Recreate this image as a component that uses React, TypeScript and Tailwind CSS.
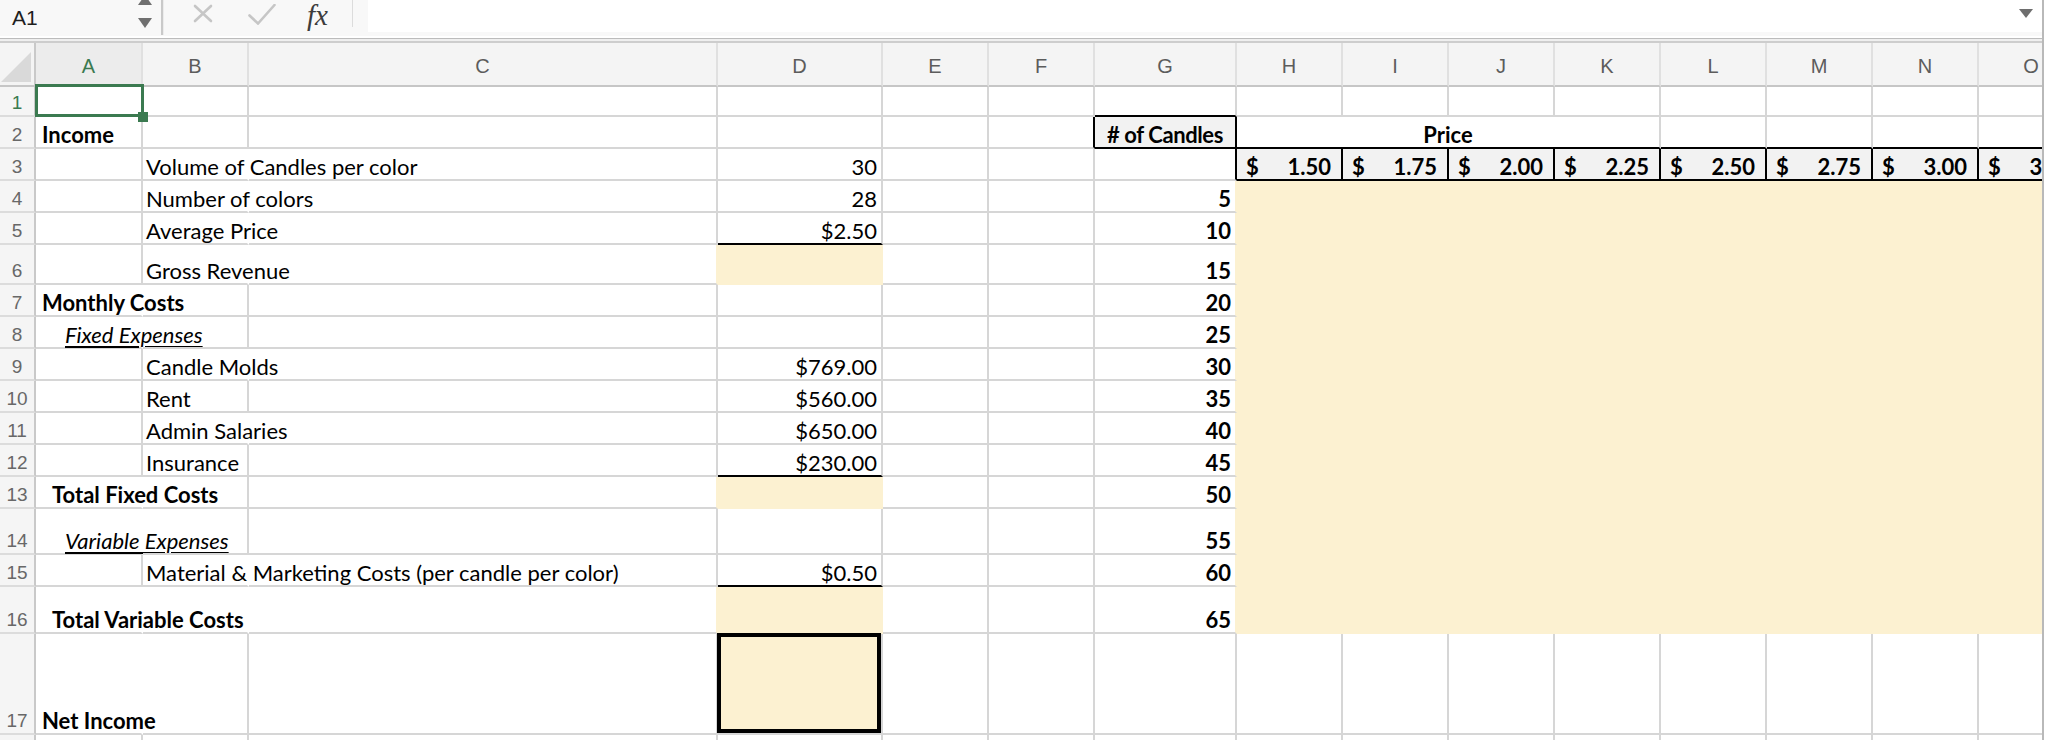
import React from 'react';

type Spec = {
  t?: React.ReactNode;
  k?: string;
  tk?: string;
  r?: string;
  b?: string;
  span?: string;
  extra?: React.ReactNode;
  skip?: boolean;
};

type RowDef = { h: string; n: string; cells: Record<string, Spec>; active?: boolean };

const LETTERS = ['A', 'B', 'C', 'D', 'E', 'F', 'G', 'H', 'I', 'J', 'K', 'L', 'M', 'N', 'O'];
const PRICE_COLS = ['H', 'I', 'J', 'K', 'L', 'M', 'N', 'O'];
const PRICES = ['1.50', '1.75', '2.00', '2.25', '2.50', '2.75', '3.00', '3.25'];
// row header + A..O
const GRID =
  'grid grid-cols-[36px_107px_106px_469px_165px_106px_106px_142px_106px_106px_106px_106px_106px_106px_106px_106px]';
const CELL_FONT = "font-['Lato',sans-serif] text-[22px] text-black";
const UI_FONT = "font-['Liberation_Sans',Arial,sans-serif]";
const GREEN = 'border-[#3b7a50]';

// cell helpers
const SKIP: Spec = { skip: true };
const cream: Spec = { k: 'bg-[#fcf1d1]', r: 'border-r-[#fcf1d1]', b: 'border-b-[#fcf1d1]' };
const creamBlock: Record<string, Spec> = Object.fromEntries(PRICE_COLS.map((c) => [c, cream]));
const over = (s: Spec): Spec => ({ ...s, r: 'border-r-transparent' });
const lbl = (t: string): Spec => ({ t, k: 'pl-[3px]' });
const num = (t: string, b?: string): Spec => ({ t, k: 'justify-end pr-[4px]', b });
const gNum = (t: string): Spec => ({ t, k: 'justify-end pr-[4px] font-bold', r: 'border-r-[#fcf1d1]' });
const head = (t: string, pl: string, style = 'font-bold'): Spec => over({ t, k: `${pl} ${style}` });
const underlined = 'italic underline decoration-[1.5px] underline-offset-[3px]';

const priceRow: Record<string, Spec> = Object.fromEntries(
  PRICE_COLS.map((c, i) => [
    c,
    {
      t: (
        <>
          <span>$</span>
          <span>{PRICES[i]}</span>
        </>
      ),
      tk: 'flex flex-1 justify-between',
      k: 'bg-[#f2f2f2] pl-[9px] pr-[10px] font-bold',
      r: 'border-r-black',
      b: 'border-b-black',
    },
  ]),
);

const selection = (
  <>
    <div className={`pointer-events-none absolute -top-[3px] -right-[3px] -bottom-[2px] -left-px z-10 border-[3px] ${GREEN}`} />
    <div className="absolute top-[25px] left-[102px] z-20 h-[10px] w-[10px] bg-[#3b7a50]" />
  </>
);

const totalBox = <div className="absolute -top-px right-0 bottom-0 -left-px z-10 border-4 border-black" />;

const rows: RowDef[] = [
  { h: 'h-[30px]', n: '1', active: true, cells: { A: { extra: selection }, G: { b: 'border-b-black' } } },
  {
    h: 'h-[32px]',
    n: '2',
    cells: {
      A: { t: 'Income', k: 'pl-[6px] font-bold' },
      F: { r: 'border-r-black' },
      G: {
        t: '# of Candles',
        k: 'justify-center bg-[#f2f2f2] font-bold tracking-[-0.4px]',
        r: 'border-r-black',
        b: 'border-b-black',
      },
      H: { t: 'Price', k: 'justify-center font-bold', span: 'col-span-4', b: 'border-b-black' },
      I: SKIP,
      J: SKIP,
      K: SKIP,
      L: { b: 'border-b-black' },
      M: { b: 'border-b-black' },
      N: { b: 'border-b-black' },
      O: { b: 'border-b-black' },
    },
  },
  {
    h: 'h-[32px]',
    n: '3',
    cells: { B: over(lbl('Volume of Candles per color')), D: num('30'), G: { r: 'border-r-black' }, ...priceRow },
  },
  { h: 'h-[32px]', n: '4', cells: { B: over(lbl('Number of colors')), D: num('28'), G: gNum('5'), ...creamBlock } },
  {
    h: 'h-[32px]',
    n: '5',
    cells: { B: over(lbl('Average Price')), D: num('$2.50', 'border-b-black'), G: gNum('10'), ...creamBlock },
  },
  {
    h: 'h-[40px]',
    n: '6',
    cells: {
      B: over(lbl('Gross Revenue')),
      C: { r: 'border-r-[#fcf1d1]' },
      D: cream,
      G: gNum('15'),
      ...creamBlock,
    },
  },
  { h: 'h-[32px]', n: '7', cells: { A: head('Monthly Costs', 'pl-[6px]'), G: gNum('20'), ...creamBlock } },
  {
    h: 'h-[32px]',
    n: '8',
    cells: { A: head('Fixed Expenses', 'pl-[29px]', underlined), G: gNum('25'), ...creamBlock },
  },
  {
    h: 'h-[32px]',
    n: '9',
    cells: { B: over(lbl('Candle Molds')), D: num('$769.00'), G: gNum('30'), ...creamBlock },
  },
  { h: 'h-[32px]', n: '10', cells: { B: lbl('Rent'), D: num('$560.00'), G: gNum('35'), ...creamBlock } },
  {
    h: 'h-[32px]',
    n: '11',
    cells: { B: over(lbl('Admin Salaries')), D: num('$650.00'), G: gNum('40'), ...creamBlock },
  },
  {
    h: 'h-[32px]',
    n: '12',
    cells: { B: lbl('Insurance'), D: num('$230.00', 'border-b-black'), G: gNum('45'), ...creamBlock },
  },
  {
    h: 'h-[32px]',
    n: '13',
    cells: {
      A: head('Total Fixed Costs', 'pl-[16px]'),
      C: { r: 'border-r-[#fcf1d1]' },
      D: cream,
      G: gNum('50'),
      ...creamBlock,
    },
  },
  {
    h: 'h-[46px]',
    n: '14',
    cells: { A: head('Variable Expenses', 'pl-[29px]', underlined), G: gNum('55'), ...creamBlock },
  },
  {
    h: 'h-[32px]',
    n: '15',
    cells: {
      B: over(lbl('Material & Marketing Costs (per candle per color)')),
      D: num('$0.50', 'border-b-black'),
      G: gNum('60'),
      ...creamBlock,
    },
  },
  {
    h: 'h-[47px]',
    n: '16',
    cells: {
      A: head('Total Variable Costs', 'pl-[16px]'),
      B: { r: 'border-r-transparent' },
      C: { r: 'border-r-[#fcf1d1]' },
      D: cream,
      G: gNum('65'),
      ...creamBlock,
    },
  },
  {
    h: 'h-[101px]',
    n: '17',
    cells: { A: head('Net Income', 'pl-[6px]'), D: { k: 'bg-[#fcf1d1]', extra: totalBox } },
  },
  { h: 'h-[32px]', n: '18', cells: {} },
];

function SheetCell({ t, k = '', tk = '', r = 'border-r-[#d6d6d6]', b = 'border-b-[#d6d6d6]', span = '', extra }: Spec) {
  return (
    <div className={`relative flex min-w-0 items-end border-r-2 border-b-2 whitespace-nowrap ${r} ${b} ${span} ${k}`}>
      {t !== undefined && <span className={`leading-[24px] ${tk}`}>{t}</span>}
      {extra}
    </div>
  );
}

function Toolbar() {
  return (
    <div className="flex h-[36px] bg-[#f8f8f8]">
      {/* name box */}
      <div className="relative flex w-[161px] items-center pl-[12px]">
        <span className={`${UI_FONT} text-[21px] text-[#1e1e1e]`}>A1</span>
        <svg className="absolute top-0 left-[138px]" width="14" height="30" viewBox="0 0 14 30">
          <polygon points="0,5 14,5 7,-5" fill="#6f6f6f" />
          <polygon points="0,18 14,18 7,28" fill="#6f6f6f" />
        </svg>
      </div>
      <div className="h-[35px] w-[3px] border-l-2 border-l-[#c9c9c9] bg-[#ececec]" />
      {/* cancel / enter / function */}
      <div className="flex w-[188px] items-start pt-[4px] pl-[29px]">
        <svg width="20" height="19" viewBox="0 0 20 19">
          <path d="M2 2L18 17M18 2L2 17" stroke="#c6c6c6" strokeWidth="2.6" strokeLinecap="round" />
        </svg>
        <svg className="ml-[35px]" width="28" height="21" viewBox="0 0 28 21">
          <path d="M1.5 11.5L10 19.5L26.5 1" stroke="#c6c6c6" strokeWidth="2.6" fill="none" strokeLinecap="round" />
        </svg>
        <span className="-mt-[10px] ml-[31px] font-['Liberation_Serif',serif] text-[29px] text-[#3c3c3c] italic">fx</span>
      </div>
      <div className="h-[27px] w-px bg-[#dcdcdc]" />
      {/* formula bar */}
      <div className="ml-[15px] flex h-[32px] flex-1 items-start justify-end bg-white pt-[9px] pr-[9px]">
        <svg width="14" height="10" viewBox="0 0 14 10">
          <polygon points="0,0 14,0 7,9" fill="#6e6e6e" />
        </svg>
      </div>
    </div>
  );
}

function ColumnHeader() {
  return (
    <div className={`${GRID} h-[44px] bg-[#f4f4f4] ${UI_FONT} text-[20px] text-[#5c5c5c]`}>
      <div className="flex items-end justify-end border-r-2 border-b-2 border-r-[#c9c9c9] border-b-[#c6c6c6] pr-[3px] pb-[3px]">
        <svg width="30" height="30" viewBox="0 0 30 30">
          <polygon points="30,0 30,30 0,30" fill="#d9d9d9" />
        </svg>
      </div>
      {LETTERS.map((l) => (
        <div
          key={l}
          className={`flex items-center justify-center border-r-2 border-b-2 border-r-[#e0e0e0] border-b-[#c6c6c6] pt-[4px] ${
            l === 'A' ? 'bg-[#ececec] text-[#3b7a50]' : ''
          }`}
        >
          {l}
        </div>
      ))}
    </div>
  );
}

export default function App() {
  return (
    <div className="flex h-[740px] w-[2046px] overflow-hidden bg-white">
      <div className="w-[2042px] overflow-hidden">
        <Toolbar />
        <div className="mt-[2px] h-[5px] border-t border-b-2 border-t-[#bcbcbc] border-b-[#cdcdcd] bg-[#efefef]" />
        <div className="w-[2085px]">
          <ColumnHeader />
          <div className={CELL_FONT}>
            {rows.map((row) => (
              <div key={row.n} className={`${GRID} ${row.h}`}>
                <div
                  className={`flex items-end justify-center border-r-2 border-b-2 border-r-[#c9c9c9] border-b-[#dcdcdc] bg-[#f5f5f5] pb-[2px] ${UI_FONT} text-[19px] leading-[20px] ${
                    row.active ? 'text-[#3b7a50]' : 'text-[#686868]'
                  }`}
                >
                  {row.n}
                </div>
                {LETTERS.map((l) => {
                  const spec = row.cells[l] ?? {};
                  if (spec.skip) return null;
                  return <SheetCell key={l} {...spec} />;
                })}
              </div>
            ))}
          </div>
        </div>
      </div>
      <div className="w-[4px] border-l-2 border-l-[#b9b9b9] bg-white" />
    </div>
  );
}
